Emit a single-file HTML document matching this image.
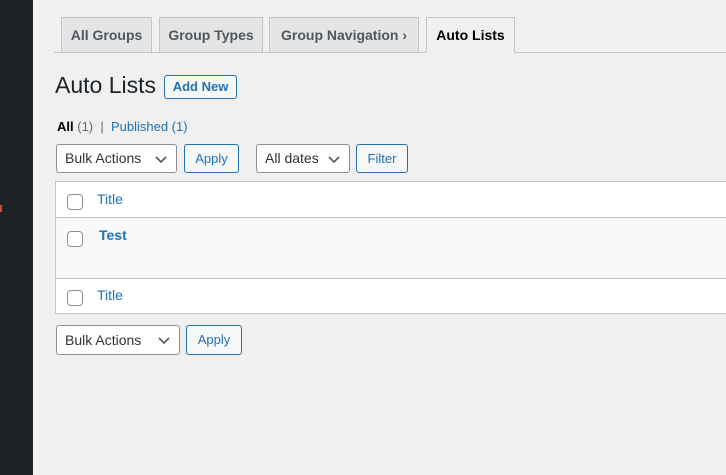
<!DOCTYPE html>
<html><head><style>
*{box-sizing:border-box;margin:0;padding:0}
body{width:726px;height:475px;background:#f0f0f1;font-family:"Liberation Sans",sans-serif;position:relative;overflow:hidden;color:#3c434a;font-size:13px}
.side{position:absolute;left:0;top:0;width:33px;height:475px;background:#1d2327}
.or{position:absolute;left:0;top:205px;width:2px;height:7px;background:#d54e21}
.tabline{position:absolute;left:54px;right:0;top:52px;height:1px;background:#c3c4c7}
.tab{position:absolute;top:17px;height:36px;border:1px solid #c3c4c7;background:#e5e5e5;font-weight:bold;font-size:14px;color:#50575e;line-height:34px;text-align:center}
.tab.on{background:#f0f0f1;border-bottom-color:#f0f0f1;color:#000}
h1{position:absolute;left:55px;top:72px;font-size:23px;font-weight:normal;color:#1d2327}
.btn{position:absolute;border:1px solid #2271b1;border-radius:3px;color:#2271b1;background:#f6f7f7;text-align:center;font-size:13px}
.sel{position:absolute;border:1px solid #8c8f94;border-radius:3px;background:#fff;color:#2c3338;font-size:14px;padding-left:8px}
.sel svg{position:absolute;right:9px;top:11px}
.sub{position:absolute;left:57px;top:119px;font-size:13px;color:#646970}
.sub a{color:#2271b1;text-decoration:none}
.tbl{position:absolute;left:55px;top:181px;width:680px;height:133px;border:1px solid #c3c4c7;background:#fff}
.row{position:absolute;left:0;right:0}
.cb{position:absolute;left:11px;width:16px;height:16px;border:1px solid #8c8f94;border-radius:4px;background:#fff}
.lnk{position:absolute;color:#2271b1;font-size:14px}
</style></head><body>
<div class="side"></div><div class="or"></div>
<div class="tabline"></div>
<div class="tab" style="left:61px;width:91px">All Groups</div>
<div class="tab" style="left:159px;width:104px">Group Types</div>
<div class="tab" style="left:269px;width:150px">Group Navigation &#8250;</div>
<div class="tab on" style="left:426px;width:89px">Auto Lists</div>
<h1>Auto Lists</h1>
<div class="btn" style="left:164px;top:75px;width:73px;height:24px;line-height:22px;font-weight:bold">Add New</div>
<div class="sub"><b style="color:#000">All</b> (1) &nbsp;|&nbsp; <a>Published (1)</a></div>
<div class="sel" style="left:56px;top:144px;width:121px;height:29px;line-height:27px">Bulk Actions<svg width="12" height="8"><path d="M1 1l5 5 5-5" stroke="#50575e" stroke-width="1.6" fill="none"/></svg></div>
<div class="btn" style="left:184px;top:144px;width:55px;height:29px;line-height:27px">Apply</div>
<div class="sel" style="left:256px;top:144px;width:94px;height:29px;line-height:27px">All dates<svg width="12" height="8"><path d="M1 1l5 5 5-5" stroke="#50575e" stroke-width="1.6" fill="none"/></svg></div>
<div class="btn" style="left:356px;top:144px;width:52px;height:29px;line-height:27px">Filter</div>
<div class="tbl">
<div class="row" style="top:0;height:36px;border-bottom:1px solid #c3c4c7"><div class="cb" style="top:12px"></div><div class="lnk" style="left:41px;top:9px">Title</div></div>
<div class="row" style="top:36px;height:60px;background:#f9f9f9"><div class="cb" style="top:13px"></div><div class="lnk" style="left:43px;top:9px;font-weight:bold">Test</div></div>
<div class="row" style="top:96px;height:36px;border-top:1px solid #c3c4c7"><div class="cb" style="top:11px"></div><div class="lnk" style="left:41px;top:8px">Title</div></div>
</div>
<div class="sel" style="left:56px;top:325px;width:124px;height:30px;line-height:28px">Bulk Actions<svg width="12" height="8"><path d="M1 1l5 5 5-5" stroke="#50575e" stroke-width="1.6" fill="none"/></svg></div>
<div class="btn" style="left:186px;top:325px;width:56px;height:30px;line-height:28px">Apply</div>
</body></html>
